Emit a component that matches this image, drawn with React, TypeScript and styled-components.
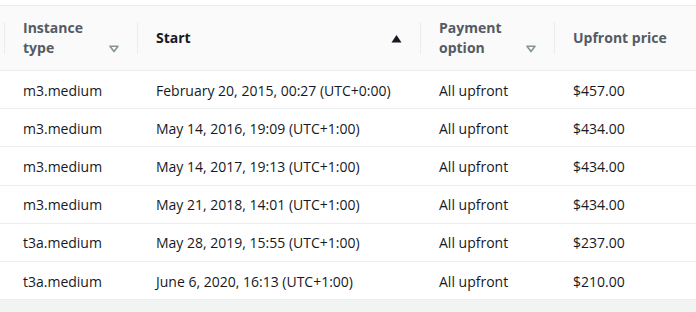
import React from 'react'
import styled, { createGlobalStyle } from 'styled-components'

const GlobalStyle = createGlobalStyle`
body {
  margin: 0;
  background: #f2f3f3;
  font-family: "Open Sans", "Noto Sans", sans-serif;
  font-size: 14px;
  color: #16191f;
}
`

const Page = styled.div`
width: 696px;
height: 312px;
overflow: hidden;
background: #f2f3f3;
`

const Table = styled.div`
background: #ffffff;
padding-top: 5px;
display: grid;
grid-template-columns: 4px 133px 283px 134px 1fr;
`

const HeadCell = styled.div<{ $lead?: boolean }>`
position: relative;
background: #fafafa;
border-top: 1px solid #eaeded;
border-bottom: 1px solid #eaeded;
height: 64px;
display: flex;
align-items: center;
justify-content: space-between;
padding: 0 18px 0 ${p => (p.$lead ? 0 : 19)}px;
&::before {
  content: '';
  display: ${p => (p.$lead ? 'none' : 'block')};
  position: absolute;
  left: 0;
  top: 16px;
  bottom: 16px;
  border-left: 1px solid #eaeded;
}
`

const HeadLabel = styled.span<{ $active?: boolean }>`
font-weight: 700;
line-height: 20px;
color: ${p => (p.$active ? '#16191f' : '#545b64')};
`

const SortIcon = styled.span<{ $active?: boolean }>`
align-self: ${p => (p.$active ? 'center' : 'flex-end')};
margin-bottom: ${p => (p.$active ? 0 : 17)}px;
display: flex;
`

const Cell = styled.div<{ $lead?: boolean }>`
box-sizing: border-box;
height: 38.2px;
padding-top: 1px;
padding-left: ${p => (p.$lead ? 0 : 19)}px;
border-bottom: 1px solid #eaeded;
display: flex;
align-items: center;
white-space: nowrap;
color: #16191f;
`

const rows = [
  ['m3.medium', 'February 20, 2015, 00:27 (UTC+0:00)', 'All upfront', '$457.00'],
  ['m3.medium', 'May 14, 2016, 19:09 (UTC+1:00)', 'All upfront', '$434.00'],
  ['m3.medium', 'May 14, 2017, 19:13 (UTC+1:00)', 'All upfront', '$434.00'],
  ['m3.medium', 'May 21, 2018, 14:01 (UTC+1:00)', 'All upfront', '$434.00'],
  ['t3a.medium', 'May 28, 2019, 15:55 (UTC+1:00)', 'All upfront', '$237.00'],
  ['t3a.medium', 'June 6, 2020, 16:13 (UTC+1:00)', 'All upfront', '$210.00'],
]

const CaretDown = () => (
  <svg width="10" height="8" viewBox="0 0 10 8">
    <path d="M1 1.2 L9 1.2 L5 6.6 Z" fill="none" stroke="#879596" strokeWidth="1.6" strokeLinejoin="round" />
  </svg>
)

const CaretUp = () => (
  <svg width="11" height="9" viewBox="0 0 11 9">
    <path d="M0.5 8.5 L10.5 8.5 L5.5 1 Z" fill="#16191f" />
  </svg>
)

function App() {
  return (
    <Page>
      <GlobalStyle />
      <Table>
        <HeadCell $lead />
        <HeadCell>
          <HeadLabel>Instance<br />type</HeadLabel>
          <SortIcon><CaretDown /></SortIcon>
        </HeadCell>
        <HeadCell>
          <HeadLabel $active>Start</HeadLabel>
          <SortIcon $active><CaretUp /></SortIcon>
        </HeadCell>
        <HeadCell>
          <HeadLabel>Payment<br />option</HeadLabel>
          <SortIcon><CaretDown /></SortIcon>
        </HeadCell>
        <HeadCell>
          <HeadLabel>Upfront price</HeadLabel>
        </HeadCell>
        {rows.map((r, i) => (
          <React.Fragment key={i}>
            <Cell $lead />
            {r.map((v, j) => (
              <Cell key={j}>{v}</Cell>
            ))}
          </React.Fragment>
        ))}
      </Table>
    </Page>
  )
}

export default App
